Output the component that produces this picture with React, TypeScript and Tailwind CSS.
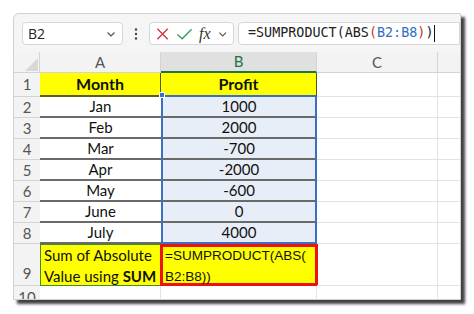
import React from 'react';

const ROWS = [
  { n: '2', month: 'Jan', profit: '1000' },
  { n: '3', month: 'Feb', profit: '2000' },
  { n: '4', month: 'Mar', profit: '-700' },
  { n: '5', month: 'Apr', profit: '-2000' },
  { n: '6', month: 'May', profit: '-600' },
  { n: '7', month: 'June', profit: '0' },
  { n: '8', month: 'July', profit: '4000' },
];

const CELL = "font-['Lato',sans-serif] text-[15px] text-[#111]";

function Chevron() {
  return (
    <svg width="12" height="12" viewBox="0 0 12 12" fill="none" stroke="#555" strokeWidth="1.2">
      <path d="M2.5 4.5 L6 8 L9.5 4.5" />
    </svg>
  );
}

function RowHead({ n, className = '' }: { n: string; className?: string }) {
  return (
    <div className={`flex items-center justify-center bg-[#f3f3f3] border-b border-[#d4d4d4] text-[#555] font-['Lato',sans-serif] text-[15px] ${className}`}>
      {n}
    </div>
  );
}

export default function App() {
  return (
    <div className="w-[474px] h-[314px] bg-white relative overflow-hidden">
      <div className="absolute left-[13px] top-[13px] w-[448px] h-[287px] bg-[#f5f5f5] border border-[#d0d0d0] rounded-tl-[6px] shadow-[4px_4px_3px_rgba(0,0,0,0.75)] overflow-hidden flex flex-col">
        {/* formula bar */}
        <div className="h-[38px] flex items-center pl-[8px] gap-[4px] shrink-0 pt-[1px]">
          <div className="w-[101px] h-[23px] bg-white border border-[#d6d6d6] rounded-[4px] flex items-center justify-between px-[5px]">
            <span className="font-['Open_Sans',sans-serif] text-[14px] text-[#222]">B2</span>
            <Chevron />
          </div>
          <svg width="16" height="16" viewBox="0 0 16 16" fill="#444" className="mx-[1px]">
            <circle cx="8" cy="3.5" r="1.2" />
            <circle cx="8" cy="8" r="1.2" />
            <circle cx="8" cy="12.5" r="1.2" />
          </svg>
          <div className="w-[85px] h-[23px] bg-white border border-[#d6d6d6] rounded-[4px] flex items-center px-[5px] gap-[6px]">
            <svg width="16" height="16" viewBox="0 0 16 16" fill="none" stroke="#d13438" strokeWidth="1.4">
              <path d="M2.5 2.5 L13.5 13.5 M13.5 2.5 L2.5 13.5" />
            </svg>
            <svg width="18" height="16" viewBox="0 0 18 16" fill="none" stroke="#3b9a5a" strokeWidth="1.4">
              <path d="M1.5 8.5 L6.5 13 L16.5 3" />
            </svg>
            <span className="font-['Liberation_Serif',serif] italic text-[16px] text-[#333] leading-none">fx</span>
            <Chevron />
          </div>
          <div className="flex-1 h-[23px] bg-white border border-[#d6d6d6] rounded-l-[4px] flex items-center pl-[9px] font-['DejaVu_Sans_Mono',monospace] text-[13.4px] text-[#222]">
            <span>=SUMPRODUCT(ABS</span>
            <span className="text-[#c0392b]">(</span>
            <span className="text-[#2f6fc0]">B2:B8</span>
            <span className="text-[#c0392b]">)</span>
            <span>)</span>
            <span className="w-px h-[17px] bg-[#111] ml-[1px]" />
          </div>
        </div>

        {/* grid */}
        <div className="grid grid-cols-[26px_121px_156px_121px_1fr] grid-rows-[21px_24px_repeat(7,21px)_42px_21px] bg-white">
          {/* column headers */}
          <div className="bg-[#f3f3f3] border-b border-r border-[#d4d4d4] relative">
            <div className="absolute right-[1px] bottom-[1px] w-0 h-0 border-l-[13px] border-l-transparent border-b-[13px] border-b-[#d8d8d8]" />
          </div>
          <div className="bg-[#f3f3f3] border-b border-r border-[#d4d4d4] flex items-center justify-center text-[#555] font-['Lato',sans-serif] text-[15px]">A</div>
          <div className="bg-[#e0e0e0] border-b-2 border-b-[#217346] border-r border-r-[#d4d4d4] flex items-center justify-center text-[#217346] font-['Lato',sans-serif] text-[15px]">B</div>
          <div className="bg-[#f3f3f3] border-b border-r border-[#d4d4d4] flex items-center justify-center text-[#555] font-['Lato',sans-serif] text-[15px]">C</div>
          <div className="bg-[#f3f3f3] border-b border-[#d4d4d4]" />

          {/* row 1 */}
          <RowHead n="1" />
          <div className={`bg-[#ffff00] border-b-2 border-b-[#5a5a2a] border-r border-r-[#4a5a1a] flex items-center justify-center font-bold ${CELL} text-[16px]`}>Month</div>
          <div className={`bg-[#ffff00] border-b-2 border-b-[#3b6fc4] border-r border-r-[#4a5a1a] flex items-center justify-center font-bold ${CELL} text-[16px]`}>Profit</div>
          <div className="border-b border-r border-[#e3e3e3]" />
          <div className="border-b border-[#e3e3e3]" />

          {ROWS.map((r, i) => (
            <React.Fragment key={r.n}>
              <RowHead n={r.n} />
              <div className={`border-b-2 border-b-[#6a6a6a] flex items-center justify-center ${CELL}`}>{r.month}</div>
              <div className={`relative bg-[#e8eef7] border-l-2 border-l-[#3b6fc4] border-r-2 border-r-[#3b6fc4] ${i < 6 ? 'border-b-2 border-b-[#6a6a6a]' : 'border-b-2 border-b-[#3b6fc4]'} flex items-center justify-center ${CELL}`}>
                {i === 0 && <div className="absolute left-[-4px] top-[-5px] w-[6px] h-[6px] bg-[#3b6fc4] border border-white" />}
                {r.profit}
              </div>
              <div className="border-b border-r border-[#e3e3e3]" />
              <div className="border-b border-[#e3e3e3]" />
            </React.Fragment>
          ))}

          {/* row 9 */}
          <RowHead n="9" className="!items-end pb-[1px]" />
          <div className={`bg-[#ffff00] border border-[#3c8a3c] flex flex-col justify-center pl-[3px] pt-[2px] leading-[21px] ${CELL}`}>
            <span>Sum of Absolute</span>
            <span>Value using <b>SUM</b></span>
          </div>
          <div className="bg-[#ffff00] border-[3px] border-[#e11] mx-[-1px] flex flex-col justify-center pl-[2px] pt-[2px] leading-[21px] font-['Liberation_Sans',sans-serif] text-[13.5px] text-[#111]">
            <span>=SUMPRODUCT(ABS(</span>
            <span>B2:B8))</span>
          </div>
          <div className="border-b border-r border-[#e3e3e3]" />
          <div className="border-b border-[#e3e3e3]" />

          {/* row 10 */}
          <RowHead n="10" className="!items-start" />
          <div className="border-r border-[#e3e3e3]" />
          <div className="border-r border-[#e3e3e3]" />
          <div className="border-r border-[#e3e3e3]" />
          <div />
        </div>
      </div>
    </div>
  );
}
